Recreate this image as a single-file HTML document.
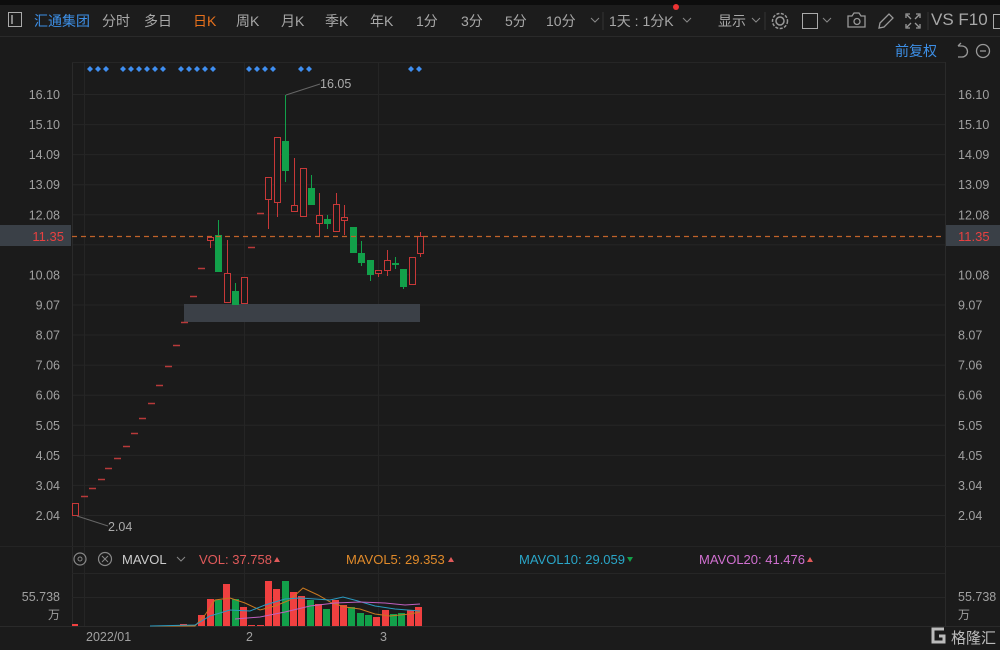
<!DOCTYPE html>
<html><head><meta charset="utf-8"><style>
*{margin:0;padding:0;box-sizing:border-box}
body{width:1000px;height:650px;background:#1b1b1b;overflow:hidden;font-family:"Liberation Sans","Noto Sans CJK SC",sans-serif;position:relative}
.top{position:absolute;left:0;top:0;width:1000px;height:5px;background:#0d0d0d}
.bar{position:absolute;left:0;top:5px;width:1000px;height:32px;background:#1c1c1c;border-bottom:1px solid #2a2a2a}
.t{position:absolute;top:12px;font-size:14px;color:#a8a8a8;white-space:nowrap;line-height:18px}
svg{position:absolute;left:0;top:0}
</style></head><body>
<div class="top"></div><div class="bar"></div>
<div class="t" style="left:34px;color:#3d8fe6">汇通集团</div>
<div class="t" style="left:102px">分时</div>
<div class="t" style="left:144px">多日</div>
<div class="t" style="left:193px;color:#e8711c">日K</div>
<div class="t" style="left:236px">周K</div>
<div class="t" style="left:281px">月K</div>
<div class="t" style="left:325px">季K</div>
<div class="t" style="left:370px">年K</div>
<div class="t" style="left:416px">1分</div>
<div class="t" style="left:461px">3分</div>
<div class="t" style="left:505px">5分</div>
<div class="t" style="left:546px">10分</div>
<div class="t" style="left:609px">1天 : 1分K</div>
<div class="t" style="left:718px">显示</div>
<div class="t" style="left:931px;font-size:17px;top:11px">VS F10</div>
<div class="t" style="left:895px;top:42px;color:#3d8fe6">前复权</div>
<svg id="s" width="1000" height="650"></svg>
<script>
var s='';
function L(x1,y1,x2,y2,c,w,d){s+='<line x1="'+x1+'" y1="'+y1+'" x2="'+x2+'" y2="'+y2+'" stroke="'+c+'" stroke-width="'+(w||1)+'"'+(d?' stroke-dasharray="'+d+'"':'')+'/>';}
function R(x,y,w,h,f,st){s+='<rect x="'+x+'" y="'+y+'" width="'+w+'" height="'+h+'" fill="'+f+'"'+(st?' stroke="'+st+'"':'')+'/>';}
function T(x,y,t,c,a,fs){s+='<text x="'+x+'" y="'+y+'" fill="'+c+'" font-size="'+(fs||13)+'" text-anchor="'+(a||'start')+'" font-family="Liberation Sans,Noto Sans CJK SC,sans-serif">'+t+'</text>';}
R(8.5,12.5,13,14,'none','#aaa');L(12,15,12,24,'#aaa',1.5);
s+='<path d="M591 18l4 4 4-4M683 18l4 4 4-4M752 18l4 4 4-4M823 18l4 4 4-4" stroke="#888" fill="none"/>';
L(603,12,603,30,'#333');L(765,12,765,30,'#333');L(928,12,928,30,'#333');
s+='<circle cx="676" cy="7" r="3" fill="#e33"/>';
s+='<circle cx="780" cy="21" r="4" fill="none" stroke="#999" stroke-width="1.5"/><circle cx="780" cy="21" r="7.5" fill="none" stroke="#999" stroke-width="1.5" stroke-dasharray="3 1.5"/>';
R(802.5,13.5,15,15,'none','#aaa');
s+='<path d="M848 16h4l2-3h5l2 3h4v11h-17z" fill="none" stroke="#999" stroke-width="1.3"/><circle cx="857" cy="21.5" r="3" fill="none" stroke="#999" stroke-width="1.3"/>';
s+='<path d="M879 28l1-5 9-9 4 4-9 9z" fill="none" stroke="#999" stroke-width="1.3"/>';
s+='<path d="M906 18v-4h4M916 14h4v4M920 24v4h-4M910 28h-4v-4M907 15l4 4M919 15l-4 4M919 27l-4-4M907 27l4-4" fill="none" stroke="#999" stroke-width="1.3"/>';
R(993.5,14.5,10,14,'none','#aaa');
s+='<path d="M958 46h4a5 5 0 0 1 0 11h-4M958 46l3-3" fill="none" stroke="#999" stroke-width="1.3"/><circle cx="983" cy="51" r="6.5" fill="none" stroke="#999" stroke-width="1.3"/>';L(980,51,986,51,'#999',1.3);
var labs=['16.10','15.10','14.09','13.09','12.08','11.09','10.08','9.07','8.07','7.06','6.06','5.05','4.05','3.04','2.04'];
for(var i=0;i<15;i++){var y=94+i*30.07;L(72,y+.5,945,y+.5,'#262626');if(i!=5){T(60,y+5,labs[i],'#a0a0a0','end',12.5);T(958,y+5,labs[i],'#a0a0a0','start',12.5);}}
L(72.5,62,72.5,626,'#2a2a2a');L(945.5,62,945.5,626,'#2a2a2a');
[84,244,378].forEach(function(x){L(x+.5,62,x+.5,626,'#252525');});
L(72,62.5,945,62.5,'#262626');
[[90,3],[123,6],[181,5],[249,4],[301,2],[411,2]].forEach(function(g){for(var k=0;k<g[1];k++){var x=g[0]+k*8,y=69;s+='<path d="M'+x+' '+(y-3)+'l3 3-3 3-3-3z" fill="#3f8ef0"/>';}});
R(184,304,236,18,'#3b4047');
[[84,496],[92,488],[101,479],[108,468],[117,458],[126,446],[134,433],[142,418],[151,403],[159,385],[168,366],[176,345],[184,322],[193,296],[201,268],[251,247],[260,213]].forEach(function(p){L(p[0]-3,p[1]+.5,p[0]+4,p[1]+.5,'#b83a3a',1.5);});
R(72.5,503.5,6,12,'none','#c83838');
var c=[[210,237,240,237,248,'r'],[218,235,272,220,272,'g'],[227,273,302,240,302,'r'],[235,291,305,283,305,'g'],[244,277,303,277,303,'r'],
[268,177,199,177,229,'r'],[277,137,202,137,217,'r'],[285,141,171,95,182,'g'],[294,205,211,158,211,'r'],[303,168,216,168,216,'r'],[311,188,205,175,205,'g'],
[319,215,223,193,237,'r'],[327,219,224,215,229,'g'],[336,204,231,193,231,'r'],[344,217,220,205,235,'r'],[353,227,253,227,253,'g'],[361,253,263,241,266,'g'],
[370,260,275,260,281,'g'],[378,270,273,270,277,'r'],[387,260,270,250,276,'r'],[395,263,265,257,269,'g'],[403,269,287,269,289,'g'],[412,257,284,257,284,'r'],[420,236,253,232,257,'r']];
c.forEach(function(k){var col=k[5]=='r'?'#c83838':'#12a04a';L(k[0]+.5,k[3],k[0]+.5,k[4],col);if(k[5]=='r')R(k[0]-2.5,k[1]+.5,6,Math.max(k[2]-k[1],2),'#1b1b1b',col);else R(k[0]-3,k[1],7,Math.max(k[2]-k[1],2),col);});
L(286,95,320,84,'#666');T(320,88,'16.05','#aaa','start',12.5);
L(77,516,108,526,'#666');T(108,531,'2.04','#aaa','start',12.5);
L(72,236.5,945,236.5,'#c0622a',1.3,'5 4');
R(0,225,71,21,'#3a4047');T(64,241,'11.35','#e84040','end',13);
R(946,225,54,21,'#3a4047');T(958,241,'11.35','#e84040','start',13);
L(0,546.5,1000,546.5,'#242424');
L(72,573.5,945,573.5,'#262626');L(72,597.5,945,597.5,'#262626');L(0,626.5,1000,626.5,'#2a2a2a');
s+='<circle cx="80" cy="559" r="6" fill="none" stroke="#888" stroke-width="1.2"/><circle cx="80" cy="559" r="2" fill="none" stroke="#888"/>';
s+='<circle cx="105" cy="559" r="6.5" fill="none" stroke="#888" stroke-width="1.2"/><path d="M102 556l6 6M108 556l-6 6" stroke="#888"/>';
T(122,564,'MAVOL','#ccc','start',13);s+='<path d="M177 557l4 4 4-4" stroke="#888" fill="none"/>';
T(199,564,'VOL: 37.758','#e05a5a','start',13);s+='<path d="M274 562l3-5 3 5z" fill="#e05a5a"/>';
T(346,564,'MAVOL5: 29.353','#e08a2a','start',13);s+='<path d="M448 562l3-5 3 5z" fill="#e05a5a"/>';
T(519,564,'MAVOL10: 29.059','#2aa6c8','start',13);s+='<path d="M627 557l3 5 3-5z" fill="#12a04a"/>';
T(699,564,'MAVOL20: 41.476','#d070d0','start',13);s+='<path d="M807 562l3-5 3 5z" fill="#e05a5a"/>';
T(60,601,'55.738','#a0a0a0','end',12.5);T(60,619,'万','#a0a0a0','end',12);
T(958,601,'55.738','#a0a0a0','start',12.5);T(958,619,'万','#a0a0a0','start',12);
var v=[[198,615,'r'],[207,599,'r'],[215,600,'g'],[223,584,'r'],[232,599,'g'],[240,607,'r'],[248,625,'r'],[257,625,'r'],[265,581,'r'],[273,589,'r'],[282,581,'g'],[290,592,'r'],[298,596,'r'],[307,600,'g'],[315,604,'r'],[323,609,'g'],[332,600,'r'],[340,605,'r'],[348,607,'g'],[357,613,'g'],[365,615,'g'],[373,617,'r'],[382,610,'r'],[390,614,'g'],[398,613,'g'],[407,610,'r'],[415,607,'r']];
v.forEach(function(b){R(b[0],b[1],7,626-b[1],b[2]=='r'?'#f04040':'#12a04a');});
R(72,624,6,2,'#f04040');R(180,624,7,2,'#f04040');
s+='<polyline points="150,626 195,626 205,615 215,600 230,598 245,603 260,610 275,606 290,600 303,588 318,595 332,603 345,607 360,609 375,614 390,616 410,614 420,612" fill="none" stroke="#c87820" stroke-width="1"/>';
s+='<polyline points="150,626 195,625 210,616 230,610 250,611 265,605 285,599 300,598 315,599 330,600 343,597 358,601 375,606 395,609 420,611" fill="none" stroke="#2a9ac0" stroke-width="1"/>';
s+='<polyline points="235,619 260,617 285,612 310,606 335,603 360,602 385,603 405,605 420,604" fill="none" stroke="#c060c0" stroke-width="1"/>';
T(86,641,'2022/01','#a0a0a0','start',12.5);T(246,641,'2','#a0a0a0','start',12.5);T(380,641,'3','#a0a0a0','start',12.5);
s+='<path d="M944 629h-11v13h11v-6h-5" fill="none" stroke="#bbb" stroke-width="3"/>';
T(951,643,'格隆汇','#bbb','start',15);
document.getElementById('s').innerHTML=s;
</script>
</body></html>
